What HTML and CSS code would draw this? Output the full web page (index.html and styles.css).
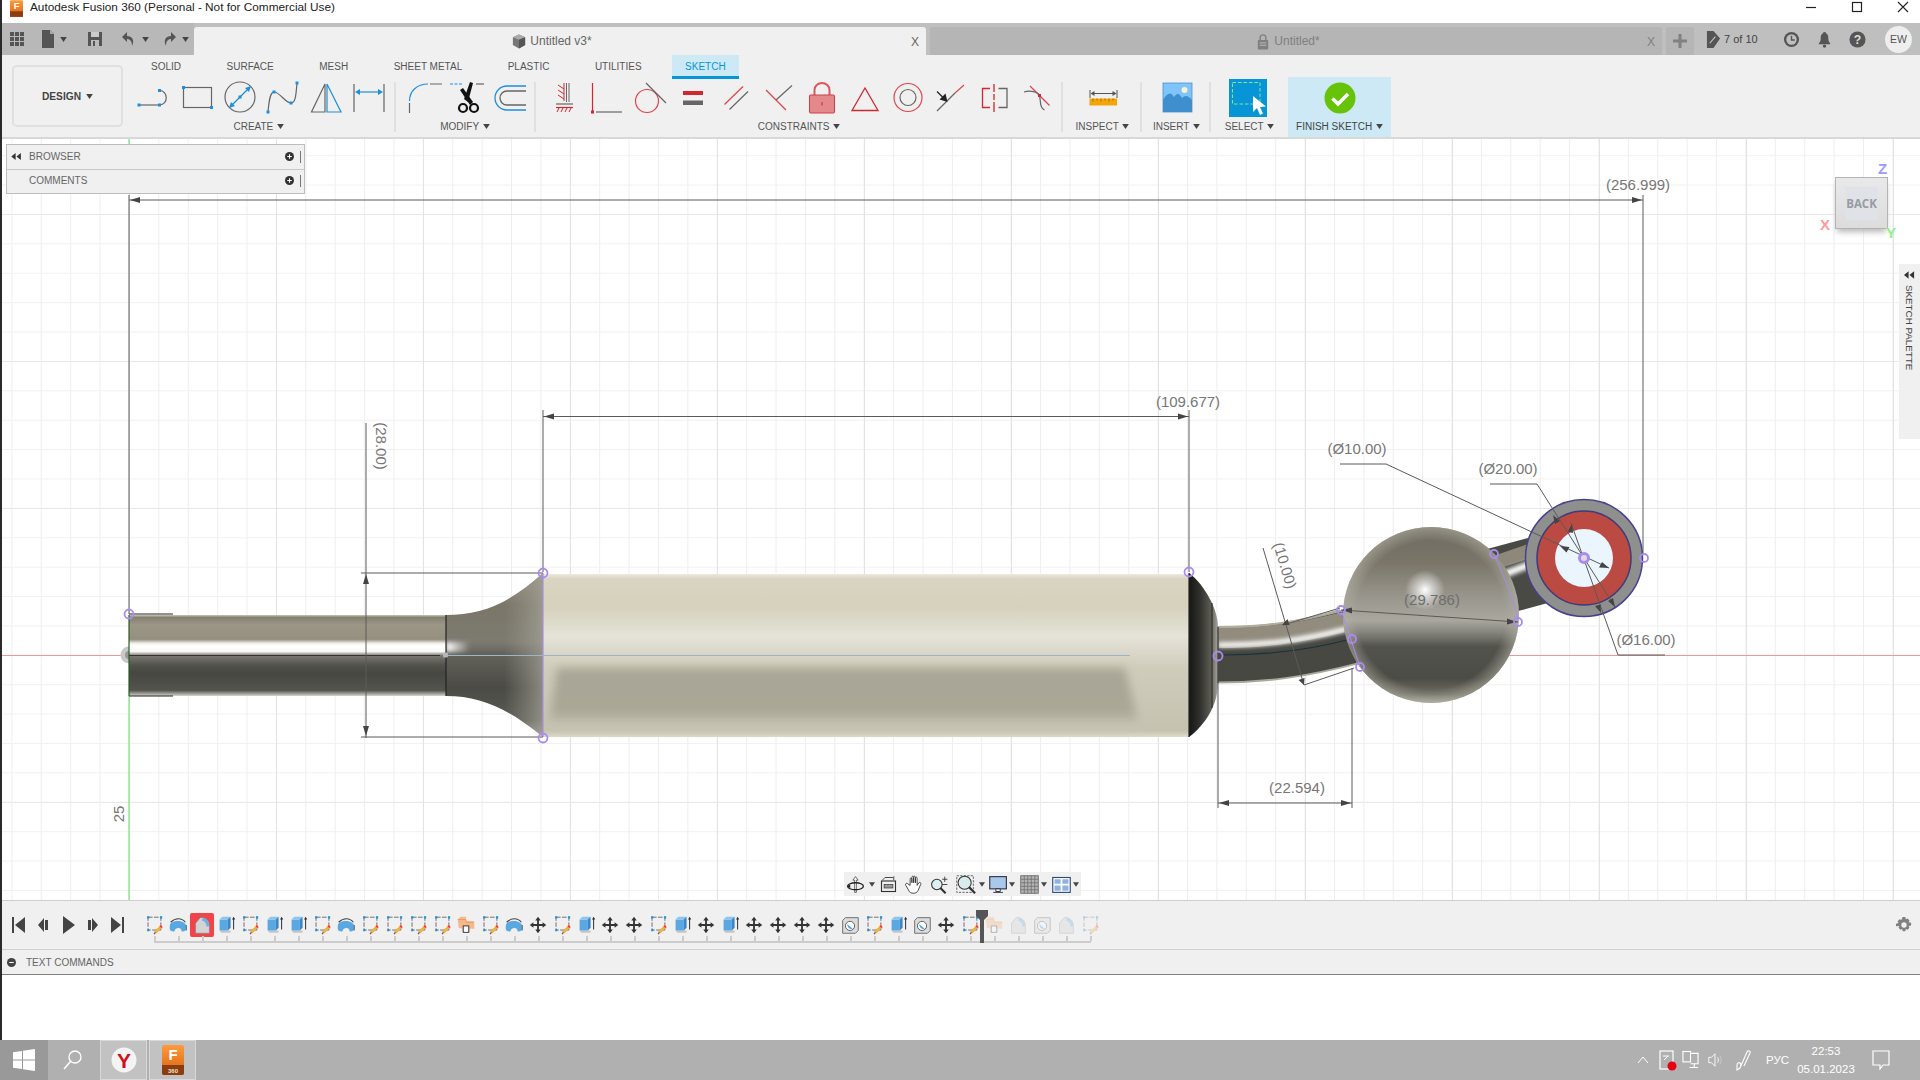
FILE: index.html
```html
<!DOCTYPE html>
<html lang="en">
<head>
<meta charset="utf-8">
<title>Autodesk Fusion 360</title>
<link rel="stylesheet" href="styles.css">
</head>
<body>
<svg class="sprite" width="0" height="0" aria-hidden="true">
  <defs>
    <symbol id="s-sk" viewBox="0 0 24 24">
      <rect x="5.5" y="3.5" width="14" height="14" fill="none" stroke="#6a6a6a" stroke-width="1" stroke-dasharray="5 1.5"/>
      <path d="M4.5 2.5h2.4v2.4H4.5zM18.5 2.500h2.4v2.4h-2.4zM4.5 16.5h2.4v2.4H4.5z" fill="#1c8fe0"/>
      <path d="M13 20.5l6.5-6.5" stroke="#f2b13a" stroke-width="3"/>
      <path d="M19 14.5l1.5-1.5" stroke="#f04040" stroke-width="3"/>
      <path d="M12 22l1.5-2" stroke="#555" stroke-width="1.2"/>
    </symbol>
    <symbol id="s-ex" viewBox="0 0 24 24">
      <path d="M5 18h12v2.5H7z" fill="#c4c4c4"/>
      <path d="M5 6h9v12H5z" fill="#5aa8e2"/>
      <path d="M5 6l3-3h9l-3 3z" fill="#8cc4ec"/>
      <path d="M14 6l3-3v12l-3 3z" fill="#3c86c0"/>
      <path d="M20.3 17V5" stroke="#333" stroke-width="1.1"/>
      <path d="M20.3 3l-1.8 3h3.6z" fill="#333"/>
    </symbol>
    <symbol id="s-rv" viewBox="0 0 24 24">
      <path d="M4 9c5-5 12-5 16 0" fill="none" stroke="#444" stroke-width="1.2"/>
      <path d="M3 13c0-7 17-7 18 0v3c0 2-2 3-4 3h-1c0-5-7-5-8 0H7c-2 0-4-1-4-3z" fill="#5aa8e2"/>
      <path d="M21 12v6" stroke="#555" stroke-width="1"/>
    </symbol>
    <symbol id="s-fi" viewBox="0 0 24 24">
      <path d="M5 21V10l5-6h3c5 1 7 5 7 9v8z" fill="#d4d4d4" stroke="#888" stroke-width=".8"/>
      <path d="M13 4c5 1 7 5 7 9l-3 1c0-4-2-6-5-7z" fill="#6cb0e6"/>
    </symbol>
    <symbol id="s-cb" viewBox="0 0 24 24">
      <path d="M3 6l3-3h6v5h8l1 2v6h-5v4H8v-4l-4-1z" fill="#f5b88a"/>
      <path d="M3 6h9v3h9" fill="none" stroke="#e89a60" stroke-width="1"/>
      <rect x="9" y="13" width="6" height="7" fill="#fff" stroke="#333" stroke-width="1"/>
    </symbol>
    <symbol id="s-mv" viewBox="0 0 24 24">
      <path d="M12 3l3 4h-2v4h4V9l4 3-4 3v-2h-4v4h2l-3 4-3-4h2v-4H7v2l-4-3 4-3v2h4V7H9z" fill="#333"/>
    </symbol>
    <symbol id="s-ho" viewBox="0 0 24 24">
      <path d="M4 7l3-3h14v14l-3 3H4z" fill="#dcdcdc" stroke="#666" stroke-width="1"/>
      <circle cx="12" cy="13" r="5" fill="#fff" stroke="#555" stroke-width="1"/>
      <path d="M9 11a4.500 4.500 0 0 0 6 5z" fill="#5aa8e2"/>
    </symbol>
    <symbol id="s-caret" viewBox="0 0 8 6"><path d="M0 0h8L4 6z" fill="#444"/></symbol>
    <symbol id="s-rew" viewBox="0 0 12 8"><path d="M0 4l5-4v8zM6 4l5-4v8z" fill="#333"/></symbol>
    <linearGradient id="g-shaft" x1="0" y1="615" x2="0" y2="696" gradientUnits="userSpaceOnUse">
      <stop offset="0" stop-color="#c8c4b8"/><stop offset=".03" stop-color="#85806f"/>
      <stop offset=".12" stop-color="#9c9686"/><stop offset=".3" stop-color="#948f7f"/>
      <stop offset=".35" stop-color="#f0efea"/><stop offset=".38" stop-color="#ffffff"/>
      <stop offset=".45" stop-color="#f8f8f6"/><stop offset=".5" stop-color="#7a7972"/>
      <stop offset=".62" stop-color="#52524c"/><stop offset=".72" stop-color="#474741"/>
      <stop offset=".93" stop-color="#54544e"/><stop offset="1" stop-color="#d4d4cc"/>
    </linearGradient>
    <linearGradient id="g-flare" x1="0" y1="0" x2="0" y2="1">
      <stop offset="0" stop-color="#8f8b7c"/><stop offset=".2" stop-color="#7a7668"/>
      <stop offset=".42" stop-color="#7d7a70"/><stop offset=".5" stop-color="#62615a"/>
      <stop offset=".7" stop-color="#4b4b45"/><stop offset=".9" stop-color="#5a5a54"/>
      <stop offset="1" stop-color="#9a9a92"/>
    </linearGradient>
    <linearGradient id="g-flare-edge" x1="0" y1="0" x2="1" y2="0">
      <stop offset=".6" stop-color="#9c9a8e" stop-opacity="0"/><stop offset="1" stop-color="#a8a69a" stop-opacity=".7"/>
    </linearGradient>
    <linearGradient id="g-hi" x1="0" y1="0" x2="1" y2="0">
      <stop offset="0" stop-color="#fff"/><stop offset="1" stop-color="#fff" stop-opacity="0"/>
    </linearGradient>
    <linearGradient id="g-handle" x1="0" y1="0" x2="0" y2="1">
      <stop offset="0" stop-color="#ece9de"/><stop offset=".03" stop-color="#d9d5c2"/>
      <stop offset=".2" stop-color="#d5d1bc"/><stop offset=".38" stop-color="#e5e3d8"/>
      <stop offset=".58" stop-color="#cfccbb"/><stop offset=".96" stop-color="#c6c2b0"/><stop offset="1" stop-color="#dedbcc"/>
    </linearGradient>
    <linearGradient id="g-handle-low" x1="0" y1="0" x2="0" y2="1">
      <stop offset="0" stop-color="#a9a596"/><stop offset=".7" stop-color="#aaa797"/><stop offset="1" stop-color="#cfccbb"/>
    </linearGradient>
    <linearGradient id="g-dome" x1="0" y1="0" x2="1" y2="0">
      <stop offset="0" stop-color="#161614"/><stop offset=".35" stop-color="#2e2e2a"/>
      <stop offset=".75" stop-color="#5c5c54"/><stop offset="1" stop-color="#a8a89e"/>
    </linearGradient>
    <linearGradient id="g-ball" x1="0" y1="0" x2="0" y2="1">
      <stop offset="0" stop-color="#6f6b62"/><stop offset=".2" stop-color="#7a7568"/>
      <stop offset=".38" stop-color="#96938a"/><stop offset=".53" stop-color="#a9a79e"/>
      <stop offset=".6" stop-color="#85847c"/><stop offset=".68" stop-color="#53534d"/>
      <stop offset=".86" stop-color="#4c4c46"/><stop offset=".95" stop-color="#6e6d63"/>
      <stop offset="1" stop-color="#a8a69a"/>
    </linearGradient>
    <radialGradient id="g-ball-edge">
      <stop offset=".84" stop-color="#b4b2a4" stop-opacity="0"/><stop offset="1" stop-color="#b4b2a4" stop-opacity=".55"/>
    </radialGradient>
    <radialGradient id="g-spot">
      <stop offset="0" stop-color="#fff"/><stop offset=".4" stop-color="#fff" stop-opacity=".55"/><stop offset="1" stop-color="#fff" stop-opacity="0"/>
    </radialGradient>
    <filter id="f-soft" x="-10%" y="-40%" width="120%" height="180%"><feGaussianBlur stdDeviation="2"/></filter>
    <filter id="f-wide" x="-5%" y="-20%" width="110%" height="140%"><feGaussianBlur stdDeviation="5"/></filter>
    <linearGradient id="g-orange" x1="0" y1="0" x2="0" y2="1">
      <stop offset="0" stop-color="#ff9a3c"/><stop offset="1" stop-color="#d8620f"/>
    </linearGradient>
  </defs>
</svg>

<div class="window">
  <header class="titlebar">
    <svg class="title-logo" viewBox="0 0 14 18"><rect width="14" height="18" rx="1" fill="url(#g-orange)"/><path d="M0 12h14v6H0z" fill="#8a3e10"/><text x="7" y="10" class="logo-f">F</text></svg>
    <span class="title-text">Autodesk Fusion 360 (Personal - Not for Commercial Use)</span>
    <div class="win-controls">
      <svg viewBox="0 0 12 12"><path d="M1 6.500h10" stroke="#222" stroke-width="1.200"/></svg>
      <svg viewBox="0 0 12 12"><rect x="1.500" y="1.500" width="9" height="9" fill="none" stroke="#222" stroke-width="1.200"/></svg>
      <svg viewBox="0 0 12 12"><path d="M1 1l10 10M11 1L1 11" stroke="#222" stroke-width="1.100"/></svg>
    </div>
  </header>

  <div class="tabbar">
    <div class="quick">
      <svg class="qa qa-grid" viewBox="0 0 16 16"><path d="M1 1h4v4H1zM6 1h4v4H6zM11 1h4v4h-4zM1 6h4v4H1zM6 6h4v4H6zM11 6h4v4h-4zM1 11h4v4H1zM6 11h4v4H6zM11 11h4v4h-4z" fill="#555"/></svg>
      <svg class="qa qa-file" viewBox="0 0 14 18"><path d="M1 0h8l4 4v14H1z" fill="#555"/><path d="M9 0l4 4H9z" fill="#aaa"/></svg>
      <svg class="qa-caret"><use href="#s-caret"/></svg>
      <svg class="qa qa-save" viewBox="0 0 16 16"><path d="M1 1h14v14H1z" fill="#555"/><path d="M4 1h8v5H4z" fill="#ccc"/><path d="M4 9h8v6H4z" fill="#bbb"/><path d="M6 10h2v5H6z" fill="#555"/></svg>
      <svg class="qa qa-undo" viewBox="0 0 16 16"><path d="M6 1L1 6l5 5V8c3 0 5 2 5 7 3-6 0-10-5-10z" fill="#555"/></svg>
      <svg class="qa-caret"><use href="#s-caret"/></svg>
      <svg class="qa qa-redo" viewBox="0 0 16 16"><path d="M10 1l5 5-5 5V8c-3 0-5 2-5 7-3-6 0-10 5-10z" fill="#555"/></svg>
      <svg class="qa-caret"><use href="#s-caret"/></svg>
    </div>
    <div class="doc-tab active">
      <svg class="doc-ico" viewBox="0 0 16 18"><path d="M8 1L1 4v9l7 4 7-4V4z" fill="#777"/><path d="M8 1L1 4l7 3 7-3z" fill="#aaa"/><path d="M8 7v10l7-4V4z" fill="#555"/></svg>
      <span class="doc-name">Untitled v3*</span>
      <span class="doc-close">X</span>
    </div>
    <div class="doc-tab inactive">
      <svg class="doc-ico" viewBox="0 0 14 18"><path d="M4 8V5a3 3 0 0 1 6 0v3" fill="none" stroke="#808080" stroke-width="1.500"/><rect x="1.500" y="7.500" width="11" height="10" rx="1" fill="#808080"/><path d="M3.500 10.500h7M3.500 13h7" stroke="#bbb" stroke-width="1"/></svg>
      <span class="doc-name">Untitled*</span>
      <span class="doc-close">X</span>
    </div>
    <div class="doc-new"><svg viewBox="0 0 14 14"><path d="M7 0v14M0 7h14" stroke="#808080" stroke-width="3"/></svg></div>
    <div class="status">
      <svg class="st-job" viewBox="0 0 16 20"><path d="M1 1h7l7 8-7 10H1z" fill="#555"/><path d="M4 14l6-7" stroke="#c8c8c8" stroke-width="1.200"/></svg>
      <span class="st-count">7 of 10</span>
      <svg class="st-ico st-clock" viewBox="0 0 18 18"><circle cx="9" cy="9" r="8" fill="#555"/><circle cx="9" cy="9" r="5.500" fill="#c0c0c0"/><path d="M9 5v4.500h3.500" fill="none" stroke="#555" stroke-width="1.500"/></svg>
      <svg class="st-ico st-bell" viewBox="0 0 18 18"><path d="M9 1c1 0 2 1 2 2 2 1 2 3 2 5 0 3 1 4 2 5v1H3v-1c1-1 2-2 2-5 0-2 0-4 2-5 0-1 1-2 2-2z" fill="#555"/><circle cx="9" cy="16" r="1.800" fill="#555"/></svg>
      <svg class="st-ico st-help" viewBox="0 0 18 18"><circle cx="9" cy="9" r="8.500" fill="#555"/><text x="9" y="13.500" class="help-q">?</text></svg>
      <span class="avatar">EW</span>
    </div>
  </div>

  <div class="toolbar">
    <button class="design-btn">DESIGN <svg class="caret"><use href="#s-caret"/></svg></button>
    <div class="ribbon">
      <nav class="tabs">
        <span class="tab">SOLID</span><span class="tab">SURFACE</span><span class="tab">MESH</span><span class="tab">SHEET METAL</span><span class="tab">PLASTIC</span><span class="tab">UTILITIES</span><span class="tab current">SKETCH</span>
      </nav>
      <div class="groups">
        <section class="group g-create">
          <div class="tools">
            <svg class="tool" viewBox="0 0 36 36"><path d="M3 26h20" stroke="#666" stroke-width="1.200" fill="none"/><path d="M23.500 11.500c9 0 9 14.500 0 14.500" stroke="#666" stroke-width="1.200" fill="none"/><path d="M1.500 24.500h3v3h-3zM22 24.500h3v3h-3zM22 10h3v3h-3z" fill="#1c8fe0"/></svg>
            <svg class="tool" viewBox="0 0 36 36"><rect x="4.500" y="8.500" width="28" height="20" fill="none" stroke="#666" stroke-width="1.200"/><path d="M3 7h3v3H3zM31 27h3v3h-3z" fill="#1c8fe0"/></svg>
            <svg class="tool" viewBox="0 0 36 36"><circle cx="18" cy="18" r="15" fill="none" stroke="#666" stroke-width="1.200"/><path d="M8 28L28 8" stroke="#1c8fe0" stroke-width="1.200"/><path d="M7 29l2-6 4 4zM29 7l-2 6-4-4z" fill="#1c8fe0"/><path d="M16.500 16.500h3v3h-3z" fill="#1c8fe0"/></svg>
            <svg class="tool" viewBox="0 0 36 36"><path d="M3 33C4 22 5 13 9 13c6 0 11 11 17 11 5 0 5-10 6-20" fill="none" stroke="#666" stroke-width="1.200"/><path d="M1.500 31.500h3v3h-3zM7.500 11.500h3v3h-3zM24.500 22.500h3v3h-3zM30.500 2.500h3v3h-3z" fill="#1c8fe0"/></svg>
            <svg class="tool" viewBox="0 0 36 36"><path d="M17 5L3.500 33H17z" fill="none" stroke="#666" stroke-width="1.200"/><path d="M19 5l14 28H19z" fill="none" stroke="#1c8fe0" stroke-width="1.200"/></svg>
            <svg class="tool" viewBox="0 0 36 36"><path d="M3 5v28M33 5v28" stroke="#666" stroke-width="1.200"/><path d="M6 13h24" stroke="#1c8fe0" stroke-width="1.200"/><path d="M4 13l5-3v6zM32 13l-5-3v6z" fill="#1c8fe0"/></svg>
          </div>
          <div class="label">CREATE <svg class="caret"><use href="#s-caret"/></svg></div>
        </section>
        <section class="group g-modify">
          <div class="tools">
            <svg class="tool" viewBox="0 0 36 36"><path d="M3.500 24v10M24 5h12" stroke="#666" stroke-width="1.200"/><path d="M3.500 22C3.500 12 11 5 22 5" fill="none" stroke="#1c8fe0" stroke-width="1.200"/></svg>
            <svg class="tool scissors" viewBox="0 0 36 36"><path d="M1 5h13" stroke="#1c8fe0" stroke-width="1.200" stroke-dasharray="3 1.500"/><path d="M27 5h8" stroke="#666" stroke-width="1.200"/><path d="M11 11l3-2 10 14-3 3z" fill="#111"/><path d="M21 3l3 1-5 19-4-3z" fill="#111"/><circle cx="14" cy="29" r="4" fill="none" stroke="#111" stroke-width="2.200"/><circle cx="25" cy="29" r="4" fill="none" stroke="#111" stroke-width="2.200"/></svg>
            <svg class="tool" viewBox="0 0 36 36"><path d="M34 7H15a12 12 0 0 0 0 24h19" fill="none" stroke="#1c8fe0" stroke-width="1.300"/><path d="M34 12H15a7 7 0 0 0 0 14h19" fill="none" stroke="#666" stroke-width="1.300"/></svg>
          </div>
          <div class="label">MODIFY <svg class="caret"><use href="#s-caret"/></svg></div>
        </section>
        <section class="group g-constraints">
          <div class="tools">
            <svg class="tool" viewBox="0 0 36 36"><path d="M20.500 4v19M23 4v19" stroke="#666" stroke-width="1"/><path d="M12 6l6 4M12 11l6 4M12 16l6 4" stroke="#d0282e" stroke-width="1"/><path d="M18 4v18" stroke="#d0282e" stroke-width="1"/><path d="M10 25h17" stroke="#666" stroke-width="1.200"/><path d="M10 28.500h17" stroke="#d0282e" stroke-width="1.200"/><path d="M13 29l-2 4M17 29l-2 4M21 29l-2 4M25 29l-2 4" stroke="#d0282e" stroke-width="1"/></svg>
            <svg class="tool" viewBox="0 0 36 36"><path d="M3.500 4v28" stroke="#d0282e" stroke-width="1.200"/><path d="M7 33h26" stroke="#666" stroke-width="1.200"/><path d="M2 31.500h3v3H2z" fill="#d0282e"/></svg>
            <svg class="tool" viewBox="0 0 36 36"><circle cx="15" cy="22" r="11.500" fill="none" stroke="#e0444a" stroke-width="1.200"/><path d="M14 4l20 20" stroke="#666" stroke-width="1.200"/></svg>
            <svg class="tool" viewBox="0 0 36 36"><path d="M8 12h20v4H8z" fill="#d0282e"/><path d="M8 21.500h20v4.500H8z" fill="#666"/></svg>
            <svg class="tool" viewBox="0 0 36 36"><path d="M6.500 25.500L25 7.500" stroke="#e0444a" stroke-width="1.200"/><path d="M11.500 30.500L30 12.500" stroke="#666" stroke-width="1.200"/></svg>
            <svg class="tool" viewBox="0 0 36 36"><path d="M5 11l20 20" stroke="#e0444a" stroke-width="1.200"/><path d="M15 21L31 6.500" stroke="#666" stroke-width="1.200"/></svg>
            <svg class="tool" viewBox="0 0 36 36"><path d="M10.500 16v-5a7.500 7 0 0 1 15 0v5" fill="none" stroke="#e0565c" stroke-width="2"/><rect x="5.500" y="16" width="25" height="18" rx="1" fill="#e5888c" stroke="#cf3e44" stroke-width="1"/><path d="M18 23v3.500" stroke="#c8282e" stroke-width="1"/></svg>
            <svg class="tool" viewBox="0 0 36 36"><path d="M18 9L31 31.500H5z" fill="none" stroke="#d0282e" stroke-width="1.300"/></svg>
            <svg class="tool" viewBox="0 0 36 36"><circle cx="18" cy="18.500" r="14" fill="none" stroke="#e0444a" stroke-width="1.200"/><circle cx="18" cy="18.500" r="8" fill="none" stroke="#666" stroke-width="1.200"/></svg>
            <svg class="tool" viewBox="0 0 36 36"><path d="M4 32l18-18" stroke="#666" stroke-width="1.200"/><path d="M22 14l9-8" stroke="#e0444a" stroke-width="1.200"/><path d="M4 12.500l8 8" stroke="#222" stroke-width="1.300"/><path d="M14.500 23l-8-2.500 6-6z" fill="#222"/></svg>
            <svg class="tool" viewBox="0 0 36 36"><path d="M18 5v8M18 15v6M18 23v10" stroke="#d0282e" stroke-width="1.300"/><path d="M14 9.500H6.500v19H14" fill="none" stroke="#d0282e" stroke-width="1.300"/><path d="M22.500 9.500H31v19h-8.500" fill="none" stroke="#666" stroke-width="1.300"/></svg>
            <svg class="tool" viewBox="0 0 36 36"><path d="M11 7l19.500 19.500" stroke="#e0444a" stroke-width="1.200"/><path d="M5 13c6-2 14 0 15.500 3.500C22 21 20 29 25.500 31" fill="none" stroke="#666" stroke-width="1.200"/><path d="M19 15h3v3h-3z" fill="#d0282e"/></svg>
          </div>
          <div class="label">CONSTRAINTS <svg class="caret"><use href="#s-caret"/></svg></div>
        </section>
        <section class="group g-inspect">
          <div class="tools">
            <svg class="tool" viewBox="0 0 36 36"><path d="M5 11v8M32 11v8" stroke="#555" stroke-width="1"/><path d="M7 14.500h23" stroke="#555" stroke-width="1"/><path d="M5.500 14.500l4-2.500v5zM31.500 14.500l-4-2.500v5z" fill="#555"/><rect x="4.500" y="19.500" width="27.500" height="7" fill="#f5a50a"/><path d="M8 19.500v3M12 19.500v2M16 19.500v3M20 19.500v2M24 19.500v3M28 19.500v2" stroke="#7a5a10" stroke-width=".7"/></svg>
          </div>
          <div class="label">INSPECT <svg class="caret"><use href="#s-caret"/></svg></div>
        </section>
        <section class="group g-insert">
          <div class="tools">
            <svg class="tool" viewBox="0 0 36 36"><rect x="4" y="4" width="29" height="29" fill="#7fc4fb" stroke="#4a94cf" stroke-width=".8"/><path d="M4 21c5-8 8-8 11-3 3-4 5-4 8 1 3-3 6-3 10 2v12H4z" fill="#3f8fcf"/><circle cx="25.500" cy="11" r="3" fill="#f7f2cf"/></svg>
          </div>
          <div class="label">INSERT <svg class="caret"><use href="#s-caret"/></svg></div>
        </section>
        <section class="group g-select">
          <div class="tools">
            <svg class="tool-wide" viewBox="0 0 38 38"><rect width="38" height="38" fill="#0696d7"/><rect x="3.500" y="3.500" width="27.500" height="21.500" fill="none" stroke="#8fe08f" stroke-width="1" stroke-dasharray="3.500 2"/><path d="M24 17v16l4-4 3 7 3-1.500-3-6.500 6-.5z" fill="#fff"/></svg>
          </div>
          <div class="label">SELECT <svg class="caret"><use href="#s-caret"/></svg></div>
        </section>
        <section class="group g-finish">
          <div class="tools">
            <svg class="tool-wide" viewBox="0 0 38 38"><circle cx="19" cy="19" r="15.500" fill="#66c308"/><path d="M11.500 19.500l5.500 5.500 10-10" fill="none" stroke="#fff" stroke-width="3.500"/></svg>
          </div>
          <div class="label">FINISH SKETCH <svg class="caret"><use href="#s-caret"/></svg></div>
        </section>
      </div>
    </div>
  </div>

  <main class="canvas">
    <svg class="scene" viewBox="0 139 1920 761" width="1920" height="761">
      <!-- axes -->
      <path d="M129 139v5M129 696v204" stroke="#7fe07f" stroke-width="1.200"/>
      <path d="M0 655.500H1920" stroke="#e89a9a" stroke-width="1.200"/>
      <circle cx="129" cy="655" r="8.500" fill="#c8c8c8"/><circle cx="129" cy="655" r="4" fill="#999"/>

      <!-- shaft and flare -->
      <path d="M446 615C482 615 510 603 543 573V737C510 710 482 696 446 696Z" fill="url(#g-flare)"/>
      <path d="M446 615C482 615 510 603 543 573V737C510 710 482 696 446 696Z" fill="url(#g-flare-edge)"/>
      <rect x="446" y="642" width="24" height="10" fill="url(#g-hi)" filter="url(#f-soft)"/>
      <rect x="129" y="615" width="317" height="81" fill="url(#g-shaft)"/>
      <path d="M129 614h44M129 696h44" stroke="#222" stroke-width="1.200"/>
      <path d="M129 615v81" stroke="#2a5a2a" stroke-width="1.200"/>
      <path d="M446 615v81" stroke="#222" stroke-width="1.200"/>

      <!-- handle -->
      <rect x="543" y="574" width="646" height="163" fill="url(#g-handle)"/>
      <path d="M557 668H1125L1140 730H548Z" fill="url(#g-handle-low)" filter="url(#f-wide)"/>
      <path d="M543 573v164" stroke="#a98bf0" stroke-width="1.200"/>
      <path d="M129 655.500H440" stroke="#3a3030" stroke-width="1.200"/>
      <path d="M446 655.500H1130" stroke="#9fb4c4" stroke-width="1"/>
      <rect x="443" y="652.500" width="5" height="5" rx="1.500" fill="#b4b8bc"/>

      <!-- dome and curved tube -->
      <path d="M1218 655C1262 655 1300 650 1350 637" fill="none" stroke="#a8a89c" stroke-width="57"/>
      <path d="M1218 655C1262 655 1300 650 1350 637" fill="none" stroke="#484842" stroke-width="53"/>
      <path d="M1218 638C1262 638 1296 634 1344 622" fill="none" stroke="#918c7d" stroke-width="20"/>
      <path d="M1218 645C1262 645 1296 642 1347 629" fill="none" stroke="#fff" stroke-width="5" filter="url(#f-soft)"/>
      <path d="M1218 627C1262 627 1296 623 1340 610" fill="none" stroke="#b0ac9e" stroke-width="2"/>
      <path d="M1224 655C1270 655 1310 650 1351 639" fill="none" stroke="#17323c" stroke-width="1.100"/>
      <path d="M1189 573C1205 585 1218 610 1218 627V683C1218 705 1205 725 1189 737Z" fill="url(#g-dome)"/>
      <path d="M1212 603v105" stroke="#222" stroke-width="1"/>
      <path d="M1218 627v56" stroke="#222" stroke-width="1"/>
      <path d="M1189 573v164" stroke="#222" stroke-width="1.200"/>

      <!-- right tube -->
      <path d="M1495 582L1540 570" fill="none" stroke="#4a4a44" stroke-width="68"/>
      <path d="M1497 562L1532 550" fill="none" stroke="#8d8879" stroke-width="14"/>
      <path d="M1500 576L1536 562" fill="none" stroke="#fff" stroke-width="7" filter="url(#f-soft)"/>

      <!-- ball -->
      <circle cx="1431" cy="615" r="88" fill="url(#g-ball)"/>
      <circle cx="1431" cy="615" r="88" fill="url(#g-ball-edge)"/>
      <circle cx="1425" cy="590" r="20" fill="url(#g-spot)"/>
      <path d="M1341 610L1360 667M1494 554C1505 580 1515 600 1518 622" fill="none" stroke="#a98bf0" stroke-width="1"/>

      <!-- ring -->
      <circle cx="1584" cy="558" r="58.500" fill="#8e908e" stroke="#4b3f8f" stroke-width="1.500"/>
      <circle cx="1584" cy="558" r="47" fill="#bb4a42" stroke="#3f3a7a" stroke-width="1.500"/>
      <circle cx="1584" cy="558" r="29" fill="#eaf5fd"/>

      <!-- dimension lines -->
      <g class="dim">
        <path d="M129 195V614M1643 195V553M129 200H1643"/>
        <path d="M543 410V572M1189 410V572M543 416.500H1189"/>
        <path d="M366 423V738M361 573H543M361 737H543"/>
        <path d="M1263 548L1304 685M1283 625L1340 608M1304 685L1354 668"/>
        <path d="M1218 627V808M1352 668V808M1218 803H1352"/>
        <path d="M1341 610L1518 622"/>
        <path d="M1340 464H1386L1609 568"/>
        <path d="M1490 484H1537L1615 607"/>
        <path d="M1665 655H1618L1571 523"/>
      </g>
      <g class="arrow">
        <path d="M130 200l10-3v6zM1642 200l-10-3v6z"/>
        <path d="M544 416.500l10-3v6zM1188 416.500l-10-3v6z"/>
        <path d="M366 574l-3 10h6zM366 736l-3-10h6z"/>
        <path d="M1219 803l10-3v6zM1351 803l-10-3v6z"/>
        <path d="M1342 610l10-2.500v6zM1517 622l-10-3.500v6z"/>
        <path d="M1282 625l5.500-6 2 6zM1304 685l-5.500-5 6-2z"/>
        <path d="M1560 546l9.500 1-3 5.500zM1609 568l-10-.5 3-5.500z"/>
        <path d="M1553 515l7 6-5 3zM1615 607l-7-6 5-3z"/>
        <path d="M1572 524l1 9-5-1.500zM1601 613l-6-7 5.500-1.500z"/>
      </g>

      <!-- points -->
      <g class="pt">
        <circle cx="129" cy="614" r="4.500"/><circle cx="543" cy="573" r="4.500"/><circle cx="543" cy="738" r="4.500"/>
        <circle cx="1189" cy="572" r="4.500"/><circle cx="1218" cy="656" r="4.500"/><circle cx="1341" cy="610" r="4"/>
        <circle cx="1352" cy="639" r="4"/><circle cx="1360" cy="667" r="4"/><circle cx="1518" cy="622" r="4"/>
        <circle cx="1494" cy="554" r="4"/><circle cx="1644" cy="558" r="4"/>
      </g>
      <circle class="pt-main" cx="1584" cy="558" r="4.500"/>

      <!-- dimension text -->
      <text class="dim-t" x="1638" y="190">(256.999)</text>
      <text class="dim-t" x="1188" y="407">(109.677)</text>
      <text class="dim-t" transform="translate(376 446) rotate(90)">(28.00)</text>
      <text class="dim-t" transform="translate(1280 567) rotate(73)">(10.00)</text>
      <text class="dim-t" x="1357" y="454">(Ø10.00)</text>
      <text class="dim-t" x="1508" y="474">(Ø20.00)</text>
      <text class="dim-t" x="1646" y="645">(Ø16.00)</text>
      <text class="dim-t faint" x="1432" y="605">(29.786)</text>
      <text class="dim-t" x="1297" y="793">(22.594)</text>
      <text class="dim-t" transform="translate(124 814) rotate(-90)">25</text>
    </svg>

    <aside class="panel">
      <div class="panel-row">
        <svg class="rewind"><use href="#s-rew"/></svg><span class="panel-name">BROWSER</span>
        <svg class="plus" viewBox="0 0 10 10"><circle cx="5" cy="5" r="5" fill="#333"/><path d="M5 2.500v5M2.500 5h5" stroke="#fff" stroke-width="1.200"/></svg>
        <span class="grip"></span>
      </div>
      <div class="panel-row">
        <span class="rewind"></span><span class="panel-name">COMMENTS</span>
        <svg class="plus" viewBox="0 0 10 10"><circle cx="5" cy="5" r="5" fill="#333"/><path d="M5 2.500v5M2.500 5h5" stroke="#fff" stroke-width="1.200"/></svg>
        <span class="grip"></span>
      </div>
    </aside>

    <div class="viewcube">
      <span class="axis ax-z">Z</span>
      <div class="cube"><span class="cube-face">BACK</span></div>
      <span class="axis ax-x">X</span>
      <span class="axis ax-y">Y</span>
    </div>

    <aside class="palette"><svg class="palette-arrow"><use href="#s-rew"/></svg><span class="palette-text">SKETCH PALETTE</span></aside>

    <div class="navbar">
      <svg class="nav n-orbit" viewBox="0 0 24 24"><path d="M12 3l3 4h-2v14h-2V7H9z" fill="#fff" stroke="#333" stroke-width=".8"/><ellipse cx="12" cy="14" rx="9" ry="4" fill="none" stroke="#222" stroke-width="1.500"/><path d="M2 14l4-2v4z" fill="#222"/></svg>
      <svg class="nav-caret"><use href="#s-caret"/></svg>
      <svg class="nav n-pan" viewBox="0 0 24 24"><rect x="4" y="8" width="16" height="12" fill="none" stroke="#333" stroke-width="1.300"/><rect x="7" y="12" width="10" height="4" fill="#9a9a9a" stroke="#333" stroke-width=".8"/><path d="M5 7l3-3h9l1-1v4" fill="none" stroke="#333" stroke-width="1"/></svg>
      <svg class="nav n-hand" viewBox="0 0 24 24"><path d="M7 13V6c0-2 2-2 2 0v4-6c0-2 2-2 2 0v6-6c0-2 2-2 2 0v6-5c0-2 2-2 2 0v8l2-3c1-1 3 0 2 2l-3 7c-1 2-3 3-5 3-3 0-5-1-6-4l-3-5c-1-2 1-3 2-2z" fill="#fff" stroke="#333" stroke-width="1"/></svg>
      <svg class="nav n-zoom" viewBox="0 0 24 24"><circle cx="9" cy="12" r="6" fill="#dff0f0" stroke="#333" stroke-width="1.200"/><path d="M13 16l6 6" stroke="#333" stroke-width="2.500"/><path d="M18 3v6M15 6h6M15 12h6" stroke="#333" stroke-width="1"/></svg>
      <svg class="nav n-fit" viewBox="0 0 24 24"><rect x="2" y="2" width="19" height="19" fill="none" stroke="#555" stroke-width="1" stroke-dasharray="2.500 1.500"/><circle cx="11" cy="10" r="7.500" fill="#d8ecec" stroke="#333" stroke-width="1.200"/><path d="M16 15l7 7" stroke="#333" stroke-width="2.500"/></svg>
      <svg class="nav-caret"><use href="#s-caret"/></svg>
      <svg class="nav n-disp" viewBox="0 0 24 24"><rect x="2" y="3" width="19" height="14" fill="#a8c8ec" stroke="#334" stroke-width="1.300"/><path d="M9 17h5v3H9zM6 21h11" stroke="#334" stroke-width="1.100" fill="#fff"/></svg>
      <svg class="nav-caret"><use href="#s-caret"/></svg>
      <svg class="nav n-grid" viewBox="0 0 24 24"><rect x="2" y="2" width="20" height="20" fill="#b4b4b4" stroke="#666"/><path d="M6 2v20M10 2v20M14 2v20M18 2v20M2 6h20M2 10h20M2 14h20M2 18h20" stroke="#666" stroke-width=".8"/></svg>
      <svg class="nav-caret"><use href="#s-caret"/></svg>
      <svg class="nav n-views" viewBox="0 0 24 24"><rect x="2" y="4" width="20" height="17" fill="#fff" stroke="#2d4a7a" stroke-width="1.300"/><path d="M4 6h7v5H4zM13 6h7v5h-7zM4 13h7v6H4zM13 13h7v6h-7z" fill="#8fb2de"/></svg>
      <svg class="nav-caret"><use href="#s-caret"/></svg>
    </div>
  </main>

  <footer class="timeline">
    <div class="player">
      <svg class="pl" viewBox="0 0 16 20"><path d="M2 2h2v16H2zM15 2v16L5 10z" fill="#444"/></svg>
      <svg class="pl" viewBox="0 0 16 20"><path d="M3 10l6-7v14zM10 5h3v10h-3z" fill="#444"/></svg>
      <svg class="pl" viewBox="0 0 16 20"><path d="M3 1l12 9-12 9z" fill="#444"/></svg>
      <svg class="pl" viewBox="0 0 16 20"><path d="M13 10L7 3v14zM3 5h3v10H3z" fill="#444"/></svg>
      <svg class="pl" viewBox="0 0 16 20"><path d="M12 2h2v16h-2zM1 2v16l10-8z" fill="#444"/></svg>
    </div>
    <div class="track">
      <div class="tl"><svg><use href="#s-sk"/></svg></div>
      <div class="tl"><svg><use href="#s-rv"/></svg></div>
      <div class="tl sel"><svg><use href="#s-fi"/></svg></div>
      <div class="tl"><svg><use href="#s-ex"/></svg></div>
      <div class="tl"><svg><use href="#s-sk"/></svg></div>
      <div class="tl"><svg><use href="#s-ex"/></svg></div>
      <div class="tl"><svg><use href="#s-ex"/></svg></div>
      <div class="tl"><svg><use href="#s-sk"/></svg></div>
      <div class="tl"><svg><use href="#s-rv"/></svg></div>
      <div class="tl"><svg><use href="#s-sk"/></svg></div>
      <div class="tl"><svg><use href="#s-sk"/></svg></div>
      <div class="tl"><svg><use href="#s-sk"/></svg></div>
      <div class="tl"><svg><use href="#s-sk"/></svg></div>
      <div class="tl"><svg><use href="#s-cb"/></svg></div>
      <div class="tl"><svg><use href="#s-sk"/></svg></div>
      <div class="tl"><svg><use href="#s-rv"/></svg></div>
      <div class="tl"><svg><use href="#s-mv"/></svg></div>
      <div class="tl"><svg><use href="#s-sk"/></svg></div>
      <div class="tl"><svg><use href="#s-ex"/></svg></div>
      <div class="tl"><svg><use href="#s-mv"/></svg></div>
      <div class="tl"><svg><use href="#s-mv"/></svg></div>
      <div class="tl"><svg><use href="#s-sk"/></svg></div>
      <div class="tl"><svg><use href="#s-ex"/></svg></div>
      <div class="tl"><svg><use href="#s-mv"/></svg></div>
      <div class="tl"><svg><use href="#s-ex"/></svg></div>
      <div class="tl"><svg><use href="#s-mv"/></svg></div>
      <div class="tl"><svg><use href="#s-mv"/></svg></div>
      <div class="tl"><svg><use href="#s-mv"/></svg></div>
      <div class="tl"><svg><use href="#s-mv"/></svg></div>
      <div class="tl"><svg><use href="#s-ho"/></svg></div>
      <div class="tl"><svg><use href="#s-sk"/></svg></div>
      <div class="tl"><svg><use href="#s-ex"/></svg></div>
      <div class="tl"><svg><use href="#s-ho"/></svg></div>
      <div class="tl"><svg><use href="#s-mv"/></svg></div>
      <div class="tl"><svg><use href="#s-sk"/></svg></div>
      <div class="tl ghost"><svg><use href="#s-cb"/></svg></div>
      <div class="tl ghost"><svg><use href="#s-fi"/></svg></div>
      <div class="tl ghost"><svg><use href="#s-ho"/></svg></div>
      <div class="tl ghost"><svg><use href="#s-fi"/></svg></div>
      <div class="tl ghost"><svg><use href="#s-sk"/></svg></div>
      <svg class="marker" viewBox="0 0 12 33"><path d="M0 0h12v6l-4 4v23H4V10L0 6z" fill="#555"/></svg>
    </div>
    <svg class="gear" viewBox="0 0 18 18"><path d="M7.500 0h3l.5 2.500 2-.9 2.200 2.200-1 2 2.800.7v3l-2.800.7 1 2-2.200 2.200-2-1-.5 2.600h-3l-.5-2.600-2 1-2.200-2.200 1-2L0 10.500v-3l2.800-.7-1-2L4 2.600l2 .9z" fill="#808080"/><circle cx="9" cy="9" r="3" fill="#f0f0f0"/></svg>
  </footer>

  <div class="cmd-head">
    <svg class="cmd-ico" viewBox="0 0 10 10"><circle cx="5" cy="5" r="5" fill="#444"/><path d="M2.500 5h5" stroke="#fff" stroke-width="1.200"/></svg>
    <span class="cmd-title">TEXT COMMANDS</span>
  </div>
  <div class="cmd-body"></div>
</div>

<footer class="taskbar">
  <div class="start">
    <svg viewBox="0 0 22 22"><path d="M0 3.200L9 2v8.500H0zM10 1.800L22 0v10.500H10zM0 11.500h9V20L0 18.800zM10 11.500h12V22l-12-1.800z" fill="#fff"/></svg>
  </div>
  <div class="search"><svg viewBox="0 0 22 22"><circle cx="14" cy="8" r="6" fill="none" stroke="#fff" stroke-width="1.300"/><path d="M9.500 12.500L3 20" stroke="#fff" stroke-width="1.500"/></svg></div>
  <div class="task-tile">
    <svg viewBox="0 0 26 26"><circle cx="13" cy="13" r="12.500" fill="#f4f4f4"/><text x="13" y="21" class="ya">Y</text></svg>
  </div>
  <div class="task-tile">
    <svg viewBox="0 0 24 30"><rect x="1" y="0" width="22" height="30" rx="2" fill="url(#g-orange)"/><path d="M1 20h22v8a2 2 0 0 1-2 2H3a2 2 0 0 1-2-2z" fill="#8a3e10"/><text x="12" y="15" class="big-f">F</text><text x="12" y="27.500" class="mini360">360</text></svg>
  </div>
  <div class="tray">
    <svg class="tr tr-up" viewBox="0 0 12 8"><path d="M1 7l5-6 5 6" fill="none" stroke="#fff" stroke-width="1"/></svg>
    <svg class="tr tr-app" viewBox="0 0 18 22"><rect x="1" y="2" width="13" height="18" fill="none" stroke="#fff" stroke-width="1.200"/><path d="M4 7h6M5 11l4-4" stroke="#fff" stroke-width="1"/><circle cx="13" cy="17" r="4.500" fill="#e60012"/></svg>
    <svg class="tr tr-net" viewBox="0 0 18 20"><rect x="1" y="1" width="8" height="11" fill="none" stroke="#fff" stroke-width="1.200"/><path d="M9 3h8v11H9M13 14v4M8 18h9" fill="none" stroke="#fff" stroke-width="1.200"/></svg>
    <svg class="tr tr-vol" viewBox="0 0 18 20"><path d="M2 7h3l4-4v14l-4-4H2z" fill="none" stroke="#fff" stroke-width="1"/><path d="M12 7c1 2 1 4 0 6" fill="none" stroke="#fff" stroke-width="1"/><path d="M14.500 5c2 3 2 7 0 10" fill="none" stroke="#ccc" stroke-width="1"/></svg>
    <svg class="tr tr-pen" viewBox="0 0 18 22"><path d="M6 19L13 3c1-2 4-1 3 1L10 17M6 19l-3 2v-5c0-2 2-3 3-2s1 3 0 5z" fill="none" stroke="#fff" stroke-width="1.100"/></svg>
    <span class="tray-lang">РУС</span>
    <div class="clock"><span>22:53</span><span>05.01.2023</span></div>
    <svg class="tr tr-note" viewBox="0 0 18 20"><path d="M1 1h16v14H11l-3 4v-4H1z" fill="none" stroke="#fff" stroke-width="1.200"/></svg>
  </div>
</footer>
</body>
</html>
```

FILE: styles.css
```css
* { box-sizing: border-box; }
html, body { margin: 0; padding: 0; width: 1920px; height: 1080px; overflow: hidden; background: #fff; }
body { display: flex; flex-direction: column; font-family: "Liberation Sans", Arial, sans-serif; font-size: 10px; color: #555; }
svg { display: block; flex: none; }
.sprite { position: absolute; }

.window { position: relative; flex: 1; min-height: 0; display: flex; flex-direction: column; }
.window::before { content: ""; position: absolute; z-index: 5; left: 0; top: 0; bottom: 0; width: 2px; background: #2a2a2a; }

/* title bar */
.titlebar { height: 23px; flex: none; display: flex; align-items: flex-start; padding-left: 10px; background: #fff; }
.title-logo { width: 13px; height: 17px; margin-right: 7px; }
.logo-f { font: bold 10px "Liberation Sans", sans-serif; fill: #fff; text-anchor: middle; }
.title-text { font-size: 11.800px; line-height: 15px; color: #222; }
.win-controls { margin-left: auto; display: flex; gap: 34px; padding: 1px 11px 0 0; }
.win-controls svg { width: 12px; height: 12px; }

/* tab bar */
.tabbar { height: 32px; flex: none; display: flex; align-items: flex-end; background: #bfbfbf; }
.quick { width: 194px; height: 32px; display: flex; align-items: center; padding-left: 9px; background: #b8b8b8; }
.qa { height: 16px; width: 16px; }
.qa-file { width: 14px; height: 18px; margin-left: 16px; }
.qa-caret { width: 7px; height: 5px; margin-left: 5px; }
.qa-save { margin-left: 20px; }
.qa-undo { margin-left: 18px; }
.qa-redo { margin-left: 12px; }
.doc-tab { position: relative; height: 28px; display: flex; align-items: center; justify-content: center; gap: 4px; border-radius: 3px 3px 0 0; font-size: 12px; padding-right: 16px; }
.doc-tab.active { width: 732px; background: #f0f0f0; color: #666; }
.doc-tab.inactive { width: 732px; margin-left: 4px; background: #b5b5b5; color: #808080; }
.doc-ico { width: 14px; height: 17px; }
.doc-close { position: absolute; right: 7px; top: 8px; font-size: 12px; color: #666; }
.inactive .doc-close { color: #808080; }
.doc-new { width: 28px; height: 28px; margin-left: 4px; display: flex; align-items: center; justify-content: center; background: #b5b5b5; border-radius: 3px 3px 0 0; }
.doc-new svg { width: 14px; height: 14px; }
.status { flex: 1; height: 32px; display: flex; align-items: center; padding-left: 12px; }
.st-job { width: 15px; height: 19px; }
.st-count { margin-left: 3px; font-size: 11px; color: #444; width: 36px; white-space: nowrap; }
.st-ico { width: 17px; height: 17px; }
.st-clock { margin-left: 23px; }
.st-bell { margin-left: 16px; }
.st-help { margin-left: 16px; }
.help-q { font: bold 13px "Liberation Sans", sans-serif; fill: #ddd; text-anchor: middle; }
.avatar { margin-left: 19px; width: 27px; height: 27px; border-radius: 50%; background: #eee; display: flex; align-items: center; justify-content: center; font-size: 10.5px; color: #555; }

/* toolbar */
.toolbar { height: 84px; flex: none; display: flex; background: #f0f0f0; border-bottom: 2px solid #d8d8d8; padding-left: 12px; }
.design-btn { width: 111px; height: 62px; margin-top: 10px; display: flex; align-items: center; justify-content: center; gap: 4px; padding: 0; background: #f0f0f0; border: 2px solid #e0e0e0; border-radius: 5px; font: bold 10.2px "Liberation Sans", sans-serif; color: #444; }
.caret { display: inline-block; width: 7px; height: 5px; vertical-align: 1px; margin-left: 1px; }
.ribbon { margin-left: 8.500px; display: flex; flex-direction: column; }
.tabs { height: 24px; display: flex; gap: 19.500px; padding-left: 6.500px; }
.tab { height: 24px; padding: 0 13px; line-height: 24px; color: #555; white-space: nowrap; }
.tab.current { background: #cde9f5; color: #0696d7; border-bottom: 3px solid #0696d7; margin-left: -2px; }
.groups { display: flex; height: 58px; }
.group { position: relative; display: flex; flex-direction: column; align-items: center; height: 58px; }
.group::after { content: ""; position: absolute; right: 0; top: 3px; height: 50px; width: 2px; background: #e0e0e0; }
.tools { display: flex; height: 36px; }
.tool { width: 36px; height: 36px; margin: 0 3.500px; }
.tool-wide { width: 38px; height: 38px; }
.label { height: 22px; line-height: 24px; white-space: nowrap; color: #555; }
.g-create { width: 264.500px; padding-right: 4px; }
.g-create .label { margin-right: 6px; }
.g-modify { width: 140px; padding-left: 2px; }
.g-modify .label { margin-right: 4px; }
.g-constraints { width: 527px; padding-left: 2px; }
.g-constraints .label { margin-right: 3px; }
.g-inspect { width: 79px; }
.g-insert { width: 69px; }
.g-select { width: 77px; }
.g-select .tools { margin-right: 4px; }
.g-select::after, .g-finish::after { display: none; }
.g-finish { width: 103px; height: 60px; margin-top: -2px; background: #cde9f5; padding-top: 2px; }
.g-finish .label { color: #444; }

/* canvas */
.canvas { position: relative; flex: 1; min-height: 0; overflow: hidden; background-color: #fff;
  background-image:
    linear-gradient(to right, #e3e3e3 1px, transparent 1px),
    linear-gradient(to bottom, #e8e8e8 1px, transparent 1px),
    linear-gradient(to right, #eeeeee 1px, transparent 1px),
    linear-gradient(to bottom, #f1f1f1 1px, transparent 1px);
  background-size: 147px 147px, 147px 147px, 29.400px 29.400px, 29.400px 29.400px;
  background-position: 129px 0, 0 75px, 11.400px 0, 0 16.200px;
}
.scene { position: absolute; left: 0; top: 0; }
.dim path { fill: none; stroke: #5a5a5a; stroke-width: 1; }
.arrow path { fill: #444; }
.pt circle { fill: none; stroke: #a98bf0; stroke-width: 1.800; }
.pt-main { fill: #ddd; stroke: #a98bf0; stroke-width: 3; }
.dim-t { font: 15px "Liberation Sans", sans-serif; fill: #777; text-anchor: middle; }
.dim-t.faint { fill: #6e6e6e; }

.panel { position: absolute; left: 6px; top: 5px; width: 299px; height: 50px; background: #f0f0f0; border: 1.500px solid #bdbdbd; }
.panel-row { height: 24px; display: flex; align-items: center; padding-left: 4px; padding-bottom: 1px; }
.panel-row + .panel-row { border-top: 1.500px solid #c8c8c8; height: 23.500px; }
.rewind { width: 11px; height: 7px; margin-right: 7px; }
.panel-name { color: #666; }
.plus { width: 9px; height: 9px; margin-left: auto; }
.grip { width: 2px; height: 12px; margin: 0 2px 0 6px; border-left: 1px solid #777; }

.viewcube { position: absolute; left: 1820px; top: 24px; width: 80px; height: 80px; }
.cube { position: absolute; left: 15px; top: 14px; width: 53px; height: 52px; display: flex; align-items: center; justify-content: center; background: linear-gradient(#e9e9e9, #dcdcdc); border: 1px solid #b4b4b4; box-shadow: 0 5px 6px -2px #b8b8b8; }
.cube-face { width: 33px; height: 33px; display: flex; align-items: center; justify-content: center; background: #dfe2e6; font: bold 11.500px "Open Sans", sans-serif; color: #979ba3; }
.axis { position: absolute; font: bold 15px "Liberation Sans", sans-serif; }
.ax-z { left: 58px; top: -3px; color: #9a9aff; }
.ax-x { left: 0; top: 53px; color: #ff9a9a; }
.ax-y { left: 66px; top: 61px; color: #8ef08e; }

.palette { position: absolute; right: 0; top: 125px; width: 21px; height: 175px; background: #f0f0f0; display: flex; flex-direction: column; align-items: center; padding-top: 7px; }
.palette-arrow { width: 11px; height: 8px; margin-bottom: 6px; }
.palette-text { writing-mode: vertical-rl; font-size: 9.800px; color: #444; white-space: nowrap; }

.navbar { position: absolute; left: 844px; top: 733px; width: 237px; height: 24px; display: flex; align-items: center; padding-left: 1px; background: #f0f0f0; }
.nav { width: 21px; height: 21px; }
.nav-caret { width: 6px; height: 5px; }
.n-orbit + .nav-caret { margin-left: 3px; }
.n-pan { margin-left: 3px; }
.n-hand { margin-left: 5px; }
.n-zoom { margin-left: 4px; }
.n-fit { margin-left: 5px; }
.n-fit + .nav-caret { margin-left: 3px; }
.n-disp { margin-left: 3px; }
.n-disp + .nav-caret { margin-left: 0; }
.n-grid { margin-left: 4px; }
.n-grid + .nav-caret { margin-left: 1px; }
.n-views { margin-left: 4px; }
.n-views + .nav-caret { margin-left: 1px; }

/* timeline */
.timeline { height: 50px; flex: none; display: flex; background: #f0f0f0; border-top: 1.500px solid #cfcfcf; border-bottom: 1.500px solid #cfcfcf; }
.player { display: flex; align-items: center; gap: 9px; padding-left: 10px; width: 142px; height: 47px; }
.pl { width: 16px; height: 20px; }
.track { position: relative; display: flex; height: 47px; padding-top: 12px; }
.track::after { content: ""; position: absolute; left: 12px; width: 937px; top: 39.500px; height: 2.500px; background: #cccccc; }
.tl { position: relative; width: 24px; height: 24px; }
.tl svg { width: 22px; height: 22px; margin: 1px; }
.tl::after { content: ""; position: absolute; left: 12px; top: 23px; height: 5px; width: 1.500px; background: #ccc; }
.tl.sel { background: #f2434a; border-radius: 2px; }
.tl.ghost svg { opacity: .32; }
.marker { position: absolute; left: 834px; top: 9px; width: 12px; height: 33px; z-index: 1; }
.gear { width: 16px; height: 16px; margin: 15.500px 8px 0 auto; }

/* text commands */
.cmd-head { height: 24px; flex: none; display: flex; align-items: center; background: #f0f0f0; padding-left: 7px; }
.cmd-ico { width: 9px; height: 9px; }
.cmd-title { margin-left: 10px; color: #666; font-size: 10px; }
.cmd-body { height: 66px; flex: none; background: #fff; border-top: 1.500px solid #808080; box-shadow: inset 2px 0 0 #888; }

/* taskbar */
.taskbar { height: 40px; flex: none; display: flex; background: #b0b0b0; color: #fff; }
.start { width: 48px; display: flex; align-items: center; justify-content: center; background: #999; }
.start svg { width: 22px; height: 22px; }
.search { width: 52px; display: flex; align-items: center; justify-content: center; padding-right: 4px; }
.search svg { width: 22px; height: 22px; }
.task-tile { width: 47px; height: 40px; margin-right: 2px; display: flex; align-items: center; justify-content: center; background: #c2c2c2; border: 1px solid #d8d8d8; }
.task-tile svg { width: 26px; height: 30px; }
.ya { font: bold 21px "Liberation Sans", sans-serif; fill: #d0111b; text-anchor: middle; }
.big-f { font: bold 15px "Liberation Sans", sans-serif; fill: #fff; text-anchor: middle; }
.mini360 { font: bold 6px "Liberation Sans", sans-serif; fill: #f0e0d0; text-anchor: middle; }
.tray { margin-left: auto; display: flex; align-items: center; padding-right: 30px; }
.tr-up { width: 12px; height: 8px; }
.tr-app { width: 18px; height: 22px; margin-left: 10px; }
.tr-net { width: 17px; height: 20px; margin-left: 5px; }
.tr-vol { width: 16px; height: 20px; margin-left: 8px; }
.tr-pen { width: 18px; height: 22px; margin-left: 11px; }
.tray-lang { font-size: 11.500px; margin-left: 14px; }
.clock { display: flex; flex-direction: column; align-items: center; width: 62px; margin-left: 6px; gap: 5px; font-size: 11.500px; line-height: 13px; }
.tr-note { width: 18px; height: 20px; margin-left: 15px; }
```
